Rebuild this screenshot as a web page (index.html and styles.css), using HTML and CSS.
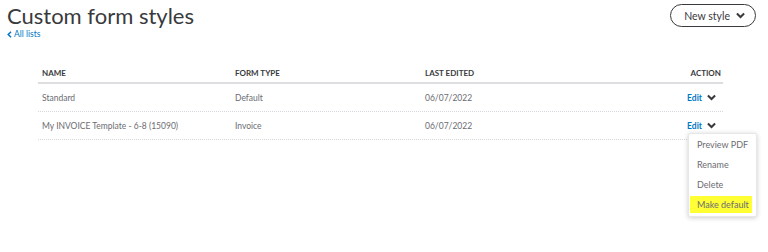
FILE: index.html
```html
<!DOCTYPE html>
<html lang="en">
<head>
    <meta charset="UTF-8">
    <title>Custom form styles</title>
    <link rel="stylesheet" href="styles.css">
</head>
<body>
    <div class="page-head">
        <div class="head-left">
            <h1 class="title">Custom form styles</h1>
            <a class="back" href="#"><svg width="5" height="7" viewBox="0 0 5 7"><path d="M4 0.8 L1.2 3.5 L4 6.2" fill="none" stroke="#0077c5" stroke-width="1.5"/></svg>All lists</a>
        </div>
        <button class="new-style" type="button">New style
            <svg width="9" height="7" viewBox="0 0 10 7"><path d="M1 1.2 L5 5.2 L9 1.2" fill="none" stroke="#393a3d" stroke-width="2.2"/></svg>
        </button>
    </div>

    <div class="list">
        <div class="row head">
            <span class="c-name">NAME</span>
            <span class="c-type">FORM TYPE</span>
            <span class="c-date">LAST EDITED</span>
            <span class="c-act">ACTION</span>
        </div>
        <div class="row">
            <span class="c-name">Standard</span>
            <span class="c-type">Default</span>
            <span class="c-date">06/07/2022</span>
            <span class="c-act"><a href="#">Edit</a>
                <svg width="9" height="7" viewBox="0 0 10 7"><path d="M1 1.2 L5 5.2 L9 1.2" fill="none" stroke="#393a3d" stroke-width="2.2"/></svg>
            </span>
        </div>
        <div class="row">
            <span class="c-name">My INVOICE Template - 6-8 (15090)</span>
            <span class="c-type">Invoice</span>
            <span class="c-date">06/07/2022</span>
            <span class="c-act"><a href="#">Edit</a>
                <svg width="9" height="7" viewBox="0 0 10 7"><path d="M1 1.2 L5 5.2 L9 1.2" fill="none" stroke="#393a3d" stroke-width="2.2"/></svg>
            </span>
        </div>

        <!-- open action menu for the second row -->
        <div class="menu">
            <div class="item">Preview PDF</div>
            <div class="item">Rename</div>
            <div class="item">Delete</div>
            <div class="item"><span class="mark">Make default</span></div>
        </div>
    </div>
</body>
</html>
```

FILE: styles.css
```css
html, body {
    height: 100%;
}
body {
    margin: 0;
    background-color: #ffffff;
    font-family: Lato, "Noto Sans", sans-serif;
    color: #393a3d;
}
.page-head {
    display: flex;
    justify-content: space-between;
    align-items: flex-start;
    padding: 3px 12px 0 7px;
}
.title {
    margin: 0;
    font-size: 22px;
    font-weight: 400;
    line-height: 26px;
    color: #393a3d;
}
.back {
    display: flex;
    align-items: center;
    gap: 2px;
    margin-top: 1px;
    font-size: 8.5px;
    line-height: 9px;
    color: #0077c5;
    text-decoration: none;
}
.new-style {
    margin-top: 1px;
    height: 23px;
    padding: 0 10px 0 13px;
    border: 1.5px solid #393a3d;
    border-radius: 12px;
    background: #ffffff;
    font-family: Lato, "Noto Sans", sans-serif;
    font-size: 10.5px;
    color: #393a3d;
    display: flex;
    align-items: center;
    gap: 6px;
}
.list {
    position: relative;
    margin: 25px 45px 0 38px;
}
.row {
    display: flex;
    align-items: center;
    height: 27px;
    padding: 0 2px 0 4px;
    border-bottom: 1px dotted #d4d7dc;
    font-size: 8.5px;
    color: #6b6c72;
}
.row.head {
    height: 18px;
    border-bottom: 2px solid #dcdee0;
    font-weight: 700;
    font-size: 8px;
    color: #393a3d;
}
.c-name { width: 193px; }
.c-type { width: 190px; }
.c-date { flex: 1; }
.c-act {
    display: flex;
    align-items: center;
    gap: 5px;
}
.row .c-act svg { margin-right: 5px; }
.c-act a {
    color: #0077c5;
    text-decoration: none;
    font-weight: 700;
}
.menu {
    position: absolute;
    top: 69px;
    right: -34px;
    width: 67px;
    padding: 1px 0 1px;
    background: #ffffff;
    border: 1px solid #e6e7e9;
    border-radius: 2px;
    box-shadow: 0 1px 5px rgba(0, 0, 0, 0.2);
}
.item {
    padding: 0 8px;
    line-height: 20px;
    font-size: 9px;
    color: #6b6c72;
    white-space: nowrap;
}
.mark {
    background: #ffff33;
    margin-left: -7px;
    padding: 3px 3px 3px 7px;
}
```
